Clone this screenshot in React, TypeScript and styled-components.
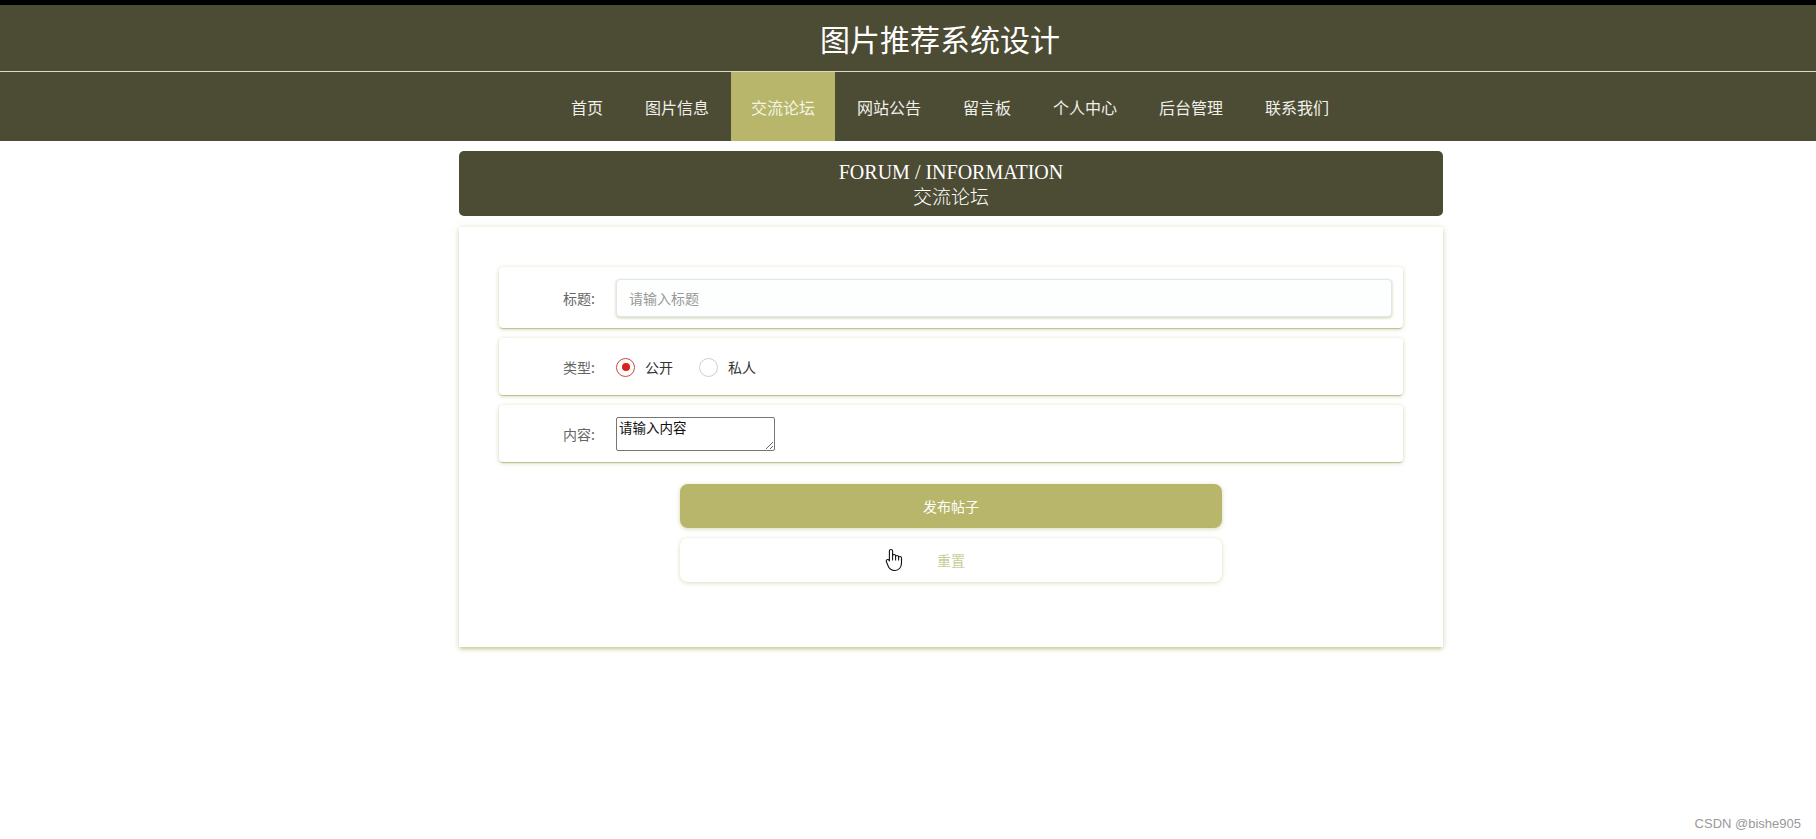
import React from "react";
import styled, { createGlobalStyle } from "styled-components";

const GlobalStyle = createGlobalStyle`
  html, body { margin: 0; padding: 0; background: #ffffff; }
  body { font-family: "Noto Sans CJK SC", "Noto Sans", sans-serif; color: #333; }
  * { box-sizing: border-box; }
`;

const OLIVE = "#4c4b34";
const ACCENT = "#b7b66a";

const Screen = styled.div`
  position: relative;
  width: 100%;
  min-height: 839px;
`;

const TopStrip = styled.div`
  height: 5px;
  background: #000;
`;

const Header = styled.header`
  height: 67px;
  background: ${OLIVE};
  border-bottom: 1px solid #dcdbc6;
  display: flex;
  align-items: center;
  justify-content: center;
  padding-left: 64px;
`;

const SiteTitle = styled.h1`
  margin: 0;
  font-size: 30px;
  font-weight: 400;
  color: #ffffff;
  line-height: 1;
`;

const Nav = styled.nav`
  height: 69px;
  background: ${OLIVE};
  display: flex;
  justify-content: center;
  gap: 2px;
  padding-left: 84px;
`;

const NavItem = styled.a<{ $active?: boolean }>`
  display: flex;
  align-items: center;
  padding: 0 20px;
  font-size: 16px;
  color: ${(p) => (p.$active ? "#f4f4e4" : "#f0f0ea")};
  background: ${(p) => (p.$active ? ACCENT : "transparent")};
  text-decoration: none;
  white-space: nowrap;
`;

const Page = styled.div`
  padding-left: 86px;
`;

const Main = styled.main`
  width: 984px;
  margin: 0 auto;
  padding-top: 10px;
`;

const Banner = styled.div`
  height: 65px;
  background: ${OLIVE};
  border-radius: 5px;
  display: flex;
  flex-direction: column;
  align-items: center;
  justify-content: center;
  color: #ffffff;
`;

const BannerEn = styled.div`
  font-family: "Liberation Serif", "Times New Roman", serif;
  font-size: 20px;
  line-height: 24px;
`;

const BannerZh = styled.div`
  font-family: "Noto Sans CJK SC", serif;
  font-size: 19px;
  line-height: 24px;
  font-weight: 300;
`;

const Card = styled.section`
  margin-top: 11px;
  background: #ffffff;
  padding: 40px 40px 65px;
  box-shadow: 0 1px 6px rgba(190, 190, 130, 0.55), 0 3px 3px -1px rgba(200, 200, 150, 0.7);
`;

const Form = styled.form`
  display: flex;
  flex-direction: column;
  gap: 10px;
`;

const Row = styled.div`
  display: flex;
  align-items: center;
  padding: 11.5px 11px 11.5px 0;
  background: #fff;
  border-radius: 4px;
  box-shadow: 0 1px 4px rgba(175, 175, 110, 0.55), 0 2px 1px -1px rgba(180, 185, 130, 0.8);
`;

const Label = styled.label`
  width: 96px;
  margin-right: 21px;
  text-align: right;
  font-size: 14px;
  color: #666;
  flex-shrink: 0;
`;

const TextInput = styled.input`
  flex: 1;
  height: 38px;
  border: 1px solid #e4e6ea;
  border-radius: 4px;
  padding: 0 12px;
  font-family: inherit;
  font-size: 14px;
  color: #333;
  background: #fdfefe;
  box-shadow: 0 1px 3px rgba(175, 175, 110, 0.6);
  outline: none;
  &::placeholder { color: #999; }
`;

const RadioGroup = styled.div`
  height: 34px;
  display: flex;
  align-items: center;
  padding-top: 1px;
`;

const RadioOption = styled.span`
  display: flex;
  align-items: center;
  gap: 10px;
  margin-right: 26px;
  font-size: 14px;
  color: #333;
`;

const RadioCircle = styled.span<{ $checked?: boolean }>`
  width: 19px;
  height: 19px;
  border-radius: 50%;
  border: 1.5px solid ${(p) => (p.$checked ? "#d2463a" : "#cfcfcf")};
  display: flex;
  align-items: center;
  justify-content: center;
  &::after {
    content: "";
    width: 8px;
    height: 8px;
    border-radius: 50%;
    background: ${(p) => (p.$checked ? "#d8231a" : "transparent")};
  }
`;

const TextArea = styled.textarea`
  width: 159px;
  height: 34px;
  border: 1px solid #767676;
  border-radius: 2px;
  padding: 1px 2px;
  font-family: "Noto Sans CJK SC", sans-serif;
  font-size: 13.5px;
  font-weight: 400;
  line-height: 16px;
  color: #111;
  resize: both;
`;

const Buttons = styled.div`
  margin: 22px auto 0;
  width: 542px;
  display: flex;
  flex-direction: column;
  gap: 10px;
`;

const Button = styled.button<{ $primary?: boolean }>`
  position: relative;
  height: 44px;
  border: none;
  border-radius: 8px;
  font-family: inherit;
  font-size: 14px;
  background: ${(p) => (p.$primary ? ACCENT : "#ffffff")};
  color: ${(p) => (p.$primary ? "#ffffff" : "#c9cc9a")};
  box-shadow: ${(p) =>
    p.$primary
      ? "0 1px 4px rgba(175, 175, 110, 0.5)"
      : "0 1px 4px rgba(190, 190, 130, 0.55)"};
  cursor: pointer;
`;

const Cursor = styled.svg`
  position: absolute;
  left: 205px;
  top: 10px;
`;

const Watermark = styled.div`
  position: absolute;
  right: 15px;
  bottom: 8px;
  font-family: "Liberation Sans", Arial, sans-serif;
  font-size: 13px;
  line-height: 15px;
  color: #999;
`;

const navItems = ["首页", "图片信息", "交流论坛", "网站公告", "留言板", "个人中心", "后台管理", "联系我们"];

export default function App() {
  return (
    <Screen>
      <GlobalStyle />
      <TopStrip />
      <Header>
        <SiteTitle>图片推荐系统设计</SiteTitle>
      </Header>
      <Nav>
        {navItems.map((n) => (
          <NavItem key={n} $active={n === "交流论坛"}>
            {n}
          </NavItem>
        ))}
      </Nav>
      <Page>
        <Main>
          <Banner>
            <BannerEn>FORUM / INFORMATION</BannerEn>
            <BannerZh>交流论坛</BannerZh>
          </Banner>
          <Card>
            <Form onSubmit={(e) => e.preventDefault()}>
              <Row>
                <Label>标题:</Label>
                <TextInput placeholder="请输入标题" />
              </Row>
              <Row>
                <Label>类型:</Label>
                <RadioGroup>
                  <RadioOption>
                    <RadioCircle $checked />
                    公开
                  </RadioOption>
                  <RadioOption>
                    <RadioCircle />
                    私人
                  </RadioOption>
                </RadioGroup>
              </Row>
              <Row>
                <Label>内容:</Label>
                <TextArea defaultValue="请输入内容" />
              </Row>
            </Form>
            <Buttons>
              <Button $primary type="button">发布帖子</Button>
              <Button type="button">
                重置
                <Cursor width="20" height="24" viewBox="0 0 20 24">
                  <path
                    d="M4.4 13 V3.1 a1.6 1.6 0 0 1 3.2 0 V8 a1.5 1.5 0 0 1 3 0 V9 a1.5 1.5 0 0 1 3 0 V10 a1.45 1.45 0 0 1 2.9 0 V15 c0 4 -2.5 7.5 -6.5 7.5 h-1 c-2.5 0 -4 -1.2 -5.3 -3.2 L1.5 14 c-.5 -.8 -.3 -1.8 .5 -2.2 c.7 -.4 1.6 -.2 2.1 .5 z"
                    fill="#fff"
                    stroke="#111"
                    strokeWidth="1.1"
                    strokeLinejoin="round"
                  />
                  <path d="M7.6 8 V12.5 M10.6 9 V12.5 M13.6 10 V12.5" stroke="#111" strokeWidth="1" />
                </Cursor>
              </Button>
            </Buttons>
          </Card>
        </Main>
      </Page>
      <Watermark>CSDN @bishe905</Watermark>
    </Screen>
  );
}
